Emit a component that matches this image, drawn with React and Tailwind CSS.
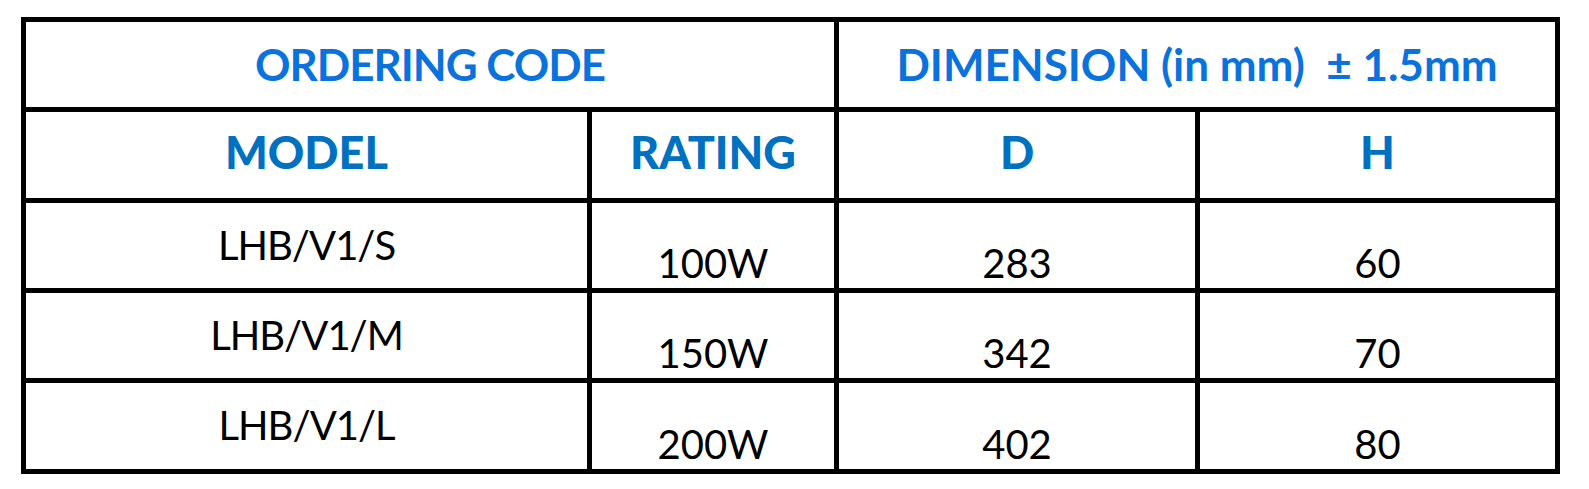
import React from 'react'

const rows = [
  { model: 'LHB/V1/S', rating: '100W', d: '283', h: '60' },
  { model: 'LHB/V1/M', rating: '150W', d: '342', h: '70' },
  { model: 'LHB/V1/L', rating: '200W', d: '402', h: '80' },
]

export default function App() {
  return (
    <div className="w-[1589px] h-[489px] bg-white pt-[17px] pl-[21px] font-['Lato','Liberation_Sans',sans-serif]">
      <div className="w-[1539px] grid grid-cols-[561px_242px_356px_355px] grid-rows-[85px_86px_85px_85px_86px] gap-[5px] p-[5px] bg-black">
        {/* group headings */}
        <div className="col-span-2 bg-white flex items-center justify-center text-[44px] tracking-[-1px] font-bold text-[#0a72dc] leading-none pb-[2px]">
          ORDERING CODE
        </div>
        <div className="col-span-2 bg-white flex items-center justify-center text-[44px] font-bold text-[#0a72dc] leading-none whitespace-pre pb-[2px]">
          {'DIMENSION (in mm)  ± 1.5mm'}
        </div>

        {/* column headings */}
        {['MODEL', 'RATING', 'D', 'H'].map((h) => (
          <div key={h} className="bg-white flex items-center justify-center text-[45px] font-black text-[#0070c0] leading-none pb-[6px]">
            {h}
          </div>
        ))}

        {/* data */}
        {rows.map((r) => (
          <React.Fragment key={r.model}>
            <div className="bg-white flex items-center justify-center text-[40px] tracking-[-1px] text-black leading-none pb-[2px]">
              {r.model}
            </div>
            <div className="bg-white flex items-end justify-center text-[40px] text-black leading-none pb-[5px]">
              {r.rating}
            </div>
            <div className="bg-white flex items-end justify-center text-[40px] text-black leading-none pb-[5px]">
              {r.d}
            </div>
            <div className="bg-white flex items-end justify-center text-[40px] text-black leading-none pb-[5px]">
              {r.h}
            </div>
          </React.Fragment>
        ))}
      </div>
    </div>
  )
}
